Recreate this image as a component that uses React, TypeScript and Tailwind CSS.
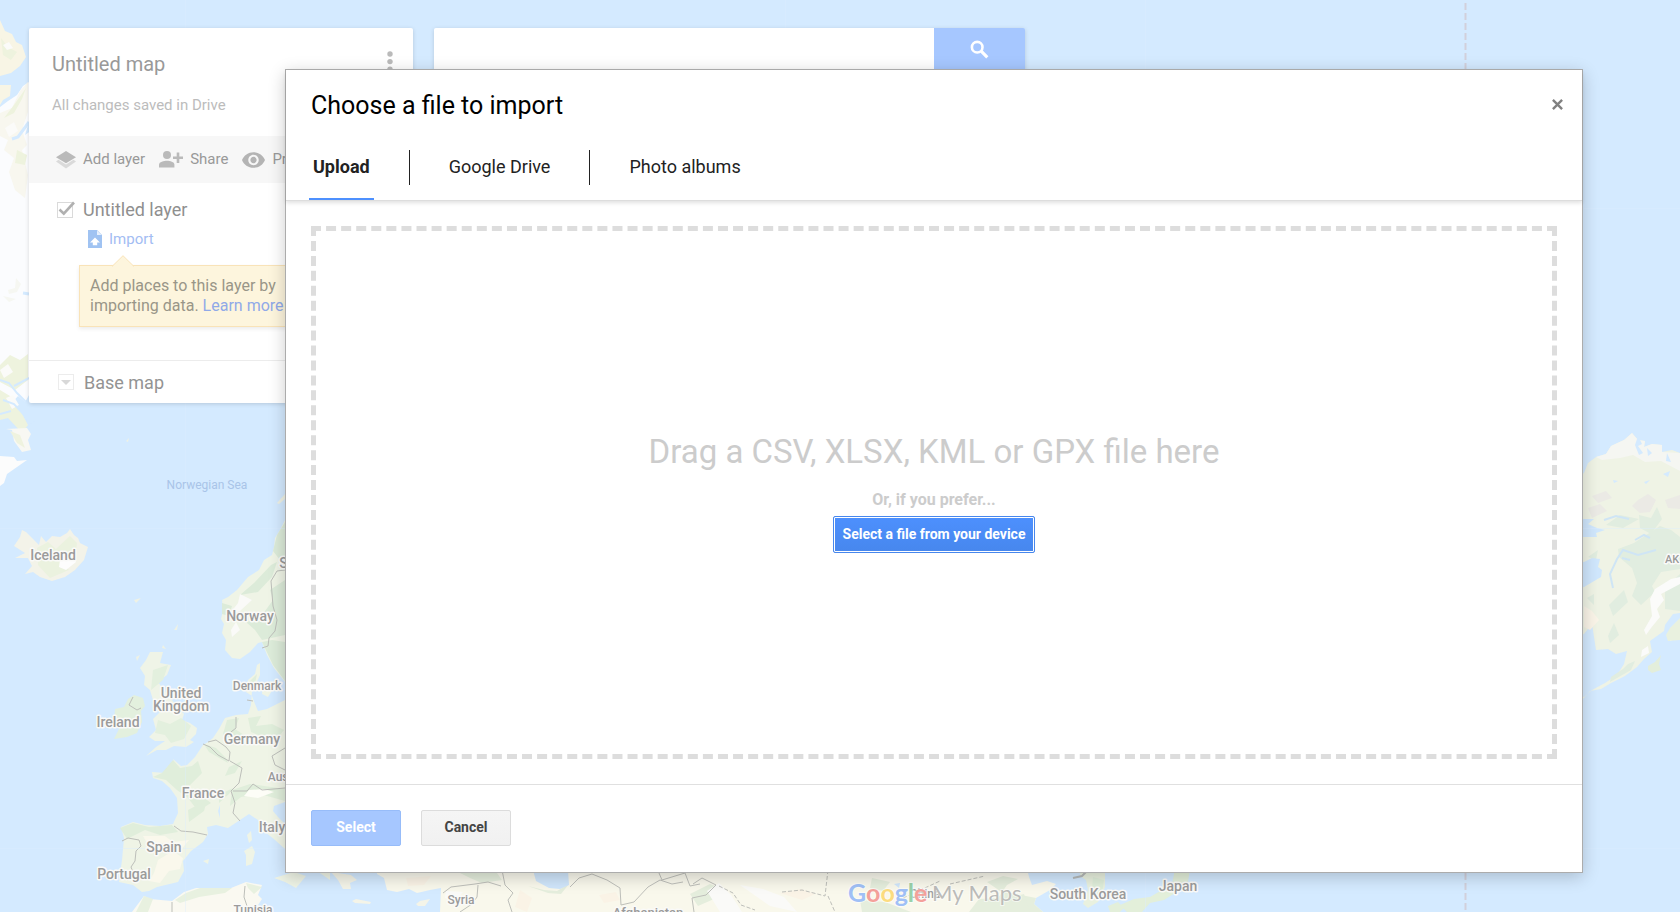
import React, { useState } from "react";

// -------------------------------------------------------
// ICONS
// -------------------------------------------------------

const LayersIcon = () => (
  <svg viewBox="0 0 20 18" className="w-5 h-[18px]">
    <path d="M0 10.5L10 17.5L20 10.5L17.5 8.8L10 13.6L2.5 8.8Z" fill="#dadada" />
    <path d="M10 0L20 6.3L10 12.2L0 6.3Z" fill="#bababa" />
  </svg>
);

const ShareIcon = () => (
  <svg viewBox="0 0 24 17" fill="#bababa" className="w-6 h-[17px]">
    <circle cx="8" cy="4" r="4" />
    <path d="M0 16.500V13.600C0 11 5 9.800 8 9.800s7.400 1.200 7.400 3.800v2.900z" />
    <path d="M17.700 1.500h2.600v4h3.700v2.400h-3.700v4h-2.600v-4H14V5.500h3.700z" />
  </svg>
);

const EyeIcon = () => (
  <svg viewBox="1 4.500 22 15" fill="#b4b4b4" className="w-[23px] h-4">
    <path d="M12 4.500C7 4.500 2.730 7.610 1 12c1.730 4.390 6 7.500 11 7.500s9.270-3.110 11-7.500c-1.730-4.390-6-7.500-11-7.500zM12 17c-2.760 0-5-2.240-5-5s2.240-5 5-5 5 2.240 5 5-2.240 5-5 5zm0-8c-1.660 0-3 1.340-3 3s1.340 3 3 3 3-1.340 3-3-1.340-3-3-3z" />
  </svg>
);

const MoreIcon = () => (
  <svg viewBox="0 0 6 22" fill="#bababa" className="w-[6px] h-[22px]">
    <circle cx="3" cy="3" r="2.700" />
    <circle cx="3" cy="10.600" r="2.700" />
    <circle cx="3" cy="18.200" r="2.700" />
  </svg>
);

const ImportIcon = () => (
  <svg viewBox="0 0 14 18" className="w-[14px] h-[18px]">
    <path d="M0 0H9L14 5V18H0Z" fill="#a0c3f2" />
    <path d="M9 0.500V5H13.500Z" fill="#e8f1fd" />
    <path d="M7 7.500L12 12.500H9.200V15.300H4.800V12.500H2Z" fill="#fff" />
  </svg>
);

const SearchIcon = () => (
  <svg viewBox="0 0 19 19" className="w-[19px] h-[19px]" fill="none" stroke="#fff">
    <circle cx="7.200" cy="7.200" r="5.300" strokeWidth="2.600" />
    <path d="M11.200 11.200L17.300 17.300" strokeWidth="3.200" />
  </svg>
);

const CloseIcon = () => (
  <svg viewBox="0 0 11 11" className="w-[11px] h-[11px]" stroke="#808080" strokeWidth="2.400">
    <path d="M0.900 0.900L10.100 10.100M10.100 0.900L0.900 10.100" />
  </svg>
);

// -------------------------------------------------------
// MAP
// -------------------------------------------------------

const LABELS = [
  { x: 53, y: 560, size: 14, text: "Iceland" },
  { x: 250, y: 621, size: 14, text: "Norway" },
  { x: 181, y: 698, size: 14, text: "United" },
  { x: 181, y: 711, size: 14, text: "Kingdom" },
  { x: 118, y: 727, size: 14, text: "Ireland" },
  { x: 257, y: 690, size: 12, text: "Denmark" },
  { x: 252, y: 744, size: 14, text: "Germany" },
  { x: 287, y: 781, size: 12, text: "Austria" },
  { x: 203, y: 798, size: 14, text: "France" },
  { x: 272, y: 832, size: 14, text: "Italy" },
  { x: 164, y: 852, size: 14, text: "Spain" },
  { x: 124, y: 879, size: 14, text: "Portugal" },
  { x: 253, y: 914, size: 12, text: "Tunisia" },
  { x: 304, y: 568, size: 14, text: "Sweden" },
  { x: 461, y: 904, size: 12, text: "Syria" },
  { x: 648, y: 917, size: 13, text: "Afghanistan" },
  { x: 925, y: 898, size: 12, text: "China" },
  { x: 1088, y: 899, size: 14, text: "South Korea" },
  { x: 1178, y: 891, size: 14, text: "Japan" },
  { x: 1672, y: 563, size: 11, text: "AK" },
];

const WorldMap = () => (
  <svg viewBox="0 0 1680 912" preserveAspectRatio="xMinYMin slice" className="absolute inset-0 w-full h-full">
    <rect width="1680" height="912" fill="#d4eaff" />

    {/* Greenland */}
    <path fill="#fbfcfe" d="M29 82L23 86L17 95L8 101L0 107V410L10 405L18 396L25 402L32 390V130L25 135L29 122Z" />
    <g fill="#f8f5e5">
      <path d="M0 20L5 31L12 34L16 42L22 45L26 57L20 66L11 73L0 76Z" />
      <path d="M0 85H11L10 96L3 100L0 105Z" />
    </g>
    <path fill="#f8f7ef" d="M20 91L28 82V112L22 130L27 145L22 150L28 175L25 198L15 190L9 172L14 158L4 150L8 140L0 136V113L12 108Z" />
    <g fill="#eef3de">
      <path d="M1 38L8 47L17 52L11 60L3 55Z" />
      <path d="M14 105L26 88L22 99L14 113L4 118Z" />
      <path d="M17 150L27 155L25 165L15 163Z" />
      <path d="M0 365L10 355L20 360L28 354V380L15 390L0 382Z" />
      <path d="M0 390L10 396L20 410L28 425L22 433L8 418L0 420Z" />
    </g>
    <path fill="#f6f7f2" d="M16 278L21 284L17 292L9 294L8 290L15 288ZM3 296L16 299L9 302Z" />
    <g fill="#fbfbf9">
      <path d="M3 45L9 42L13 48L7 50ZM5 128L14 122L18 131L9 137ZM0 370L8 364L13 372L4 378ZM6 398L13 395L19 405L12 409Z" />
    </g>
    <g fill="none" stroke="#d4eaff">
      <path d="M0 380L9 383L17 393L29 405M3 400L14 404L29 420M14 386L29 378M0 414L11 411" strokeWidth="2" />
      <path d="M29 294L23 293M29 122L18 137L12 139" strokeWidth="3" />
    </g>
    <path fill="#d4eaff" d="M29 403L22 412L29 425L36 420V403Z" />
    <path fill="#f8f8f3" d="M6 429L12 430L14 441L22 452L31 450L28 440L31 434L27 428Z" />
    <path fill="#eff3df" d="M10 431L20 435L25 448L17 443Z" />
    <path fill="#fcfcfc" d="M0 456L14 457L17 461L27 460L17 467L7 474L4 483L0 486Z" />

    {/* Iceland and the small islands */}
    <path fill="#f3f3e9" d="M22 530L26 532L34 540L39 545L41 536L46 542L52 536L60 537L67 533L70 529L74 535L78 538L80 543L88 547L84 560L75 570L65 577L52 581L40 577L33 572L25 574L32 566L28 558L15 558L25 553L14 546L20 537Z" />
    <path fill="#ebf2df" d="M37 548L48 542L56 549L70 536L77 543L75 558L60 562L69 570L50 578L38 565Z" />
    <path fill="#fdfdfd" d="M60 560L73 555L76 562L66 570L59 567Z" />
    <path fill="#eff2e5" d="M134 600L141 598L136 603ZM174 630L178 624L177 630ZM136 657L140 655L137 661ZM126 441L129 438L128 442ZM163 645L166 649L162 648ZM277 503L285 494V499L279 504Z" />

    {/* Scandinavia */}
    <path fill="#eff4e6" d="M330 500L285 520L280 530L275 538L274 547L272 555L264 560L259 570L248 577L237 590L228 597L222 600L223 610L221 619L224 624L222 633L226 640L225 650L232 658L240 659L250 652L258 643L262 642L267 655L274 668L285 682H330Z" />
    <g fill="#dcebd9">
      <path d="M285 522L277 535L273 551L280 560L285 560ZM271 565L277 562L272 577L258 592L240 595L254 583ZM285 580L270 590L273 600L260 618L246 622L255 630L262 640L285 635ZM222 603L232 606L229 616L222 614Z" />
      <path d="M262 642L272 640L285 642V681L273 665Z" />
    </g>
    <g fill="#fafaf8">
      <path d="M240 594L252 600L240 611L228 616L238 603ZM231 630L236 622L240 630L232 637Z" />
    </g>
    <path d="M285 570L277 571L271 581L273 606L277 620L275 631L269 638L268 646L262 648" fill="none" stroke="#bdbfba" />

    {/* Britain and Ireland */}
    <path fill="#eff4e7" d="M150 652L163 652L160 663L171 665L167 675L158 682L164 690L176 705L184 714L182 720L190 723L197 728L196 734L190 740L194 742L186 747L174 746L166 750L157 750L146 756L156 747L165 741L155 741L149 737L156 730L153 719L160 712L162 703L153 700L150 690L144 685L145 676L140 668L146 660Z" />
    <path fill="#e3f0de" d="M153 670L168 665L163 680L151 690ZM158 720L170 724L181 718L191 726L184 739L171 743L165 735L155 733Z" />
    <path fill="#e3f0de" d="M128 699L134 695L143 698L145 706L141 711L142 722L137 733L127 737L114 739L120 727L114 720L115 709L124 707Z" />
    <path d="M133 697L129 705L137 710L141 708" fill="none" stroke="#bdbfba" />

    {/* Continental Europe */}
    <path fill="#eff4e6" d="M330 700L285 700L277 704L267 709L258 711L255 704L252 696L246 692L248 680L255 674L257 665L260 663L260 675L256 684L252 691L251 705L248 714L236 715L225 718L219 729L213 738L208 742L203 745L195 757L187 765L181 766L173 759L176 771L165 773L152 772L153 778L162 781L170 788L177 798L178 813L173 824L160 826L145 825L133 822L121 827L124 838L122 860L119 882L133 885L142 892L149 891L157 887L178 882L184 871L183 861L191 851L203 842L208 834L207 827L216 825L228 828L240 820L249 814L258 820L264 831L275 840L285 849L330 880Z" />
    <path fill="#eff4e6" d="M263 684L271 681L273 689L268 697L262 694Z" />
    <g fill="#e0eedb">
      <path d="M173 760L180 768L192 766L198 761L202 773L188 787L199 794L211 803L198 811L188 798L177 790L166 780L153 777L162 773Z" />
      <path d="M227 720L239 718L235 729L244 735L232 744L223 734ZM248 718L261 716L256 726L272 724L284 730L276 740L263 737L251 732Z" />
      <path d="M120 828L133 823L149 827L172 825L178 832L160 835L145 830L127 839ZM204 744L216 748L226 758L228 763L209 752Z" />
      <path d="M232 790L250 784L285 789V801L260 794L241 797L230 806ZM229 767L242 761L235 773L225 776Z" />
      <path d="M188 810L207 800L204 811L189 822ZM248 683L257 674L254 688ZM219 795L233 788L229 794L219 803Z" />
    </g>
    <g fill="#faf8ec">
      <path d="M158 860L173 851L183 858L180 869L169 871L160 883L149 881L154 873Z" />
      <path d="M143 836L165 836L173 842L189 840L181 850L166 843L148 845Z" />
    </g>
    <path fill="#fdfdf7" d="M249 790L264 789L274 792L258 798L244 796Z" />
    <path fill="#d4eaff" d="M274 806L285 802V824L278 817L273 811ZM218 811L220 805L220 818Z" />
    <g fill="#eff4e6">
      <path d="M247 835L251 831L252 840L249 843ZM244 851L252 846L255 852L252 864L246 866L246 855ZM203 861L209 859L208 864ZM274 878L294 872L306 876L296 888L285 882Z" />
    </g>
    <g fill="none" stroke="#bdbfba">
      <path d="M203 744L210 747L218 755L229 761L230 752L226 747L216 740L208 742M230 761L242 768L239 783L231 791L235 803L233 813L240 821M233 791L247 791L253 784L262 790L285 788M236 717L236 728L231 732M174 826L181 831L193 832L207 835M122 841L128 838L139 840L141 846L136 851L135 861L131 867L134 875L127 880M285 748L272 756L275 765L285 770" />
      <path d="M247 700L253 701" />
    </g>

    {/* North Africa */}
    <path fill="#faf9f1" d="M132 912L144 896L150 899L172 901L184 892L196 888L231 888L246 882L262 885L258 895L262 899L258 905L268 912Z" />
    <path fill="#e8f1e0" d="M136 912L144 896L153 899L148 912ZM186 893L200 888L232 888L225 893L199 897L180 903L175 900ZM246 883L262 887L254 894L248 888Z" />
    <path d="M172 902V912M245 886L244 897L249 912" fill="none" stroke="#bdbfba" />

    {/* Mediterranean through to China */}
    <path fill="#f9f8ec" d="M377 860V874L384 878L387 890L397 892L409 889L417 893L430 890L441 888L440 912H1043L1034 904L1036 898L1050 890L1056 884L1047 881L1032 885L1029 877L1025 860Z" />
    <path fill="#f4f4e8" d="M331 872L351 875L357 880L350 883L351 889L343 889L338 880Z" />
    <path fill="#f4f4e8" d="M352 901L356 899L371 902L370 904L355 903ZM416 904L420 901L430 899L425 906L418 906Z" />
    <g fill="#e5eedd">
      <path d="M460 873L497 873L502 880L482 883L470 878ZM528 886L544 890L557 891L569 884L561 894L548 893ZM690 894L710 884L721 888L714 899L698 906ZM987 882L1003 876L1018 879L1007 885L998 898L979 899L969 912H1043L1034 904L1036 898L1000 891Z" />
      <path d="M872 878L890 882L883 891L870 888ZM1000 900L1024 894L1030 912H1006ZM860 900L885 902L911 912H862Z" />
    </g>
    <g fill="#faf3e6">
      <path d="M520 890L532 898L527 912L515 907ZM780 893L801 889L815 894L802 900ZM599 895L616 892L620 900L604 903ZM406 878L431 876L424 885L408 886Z" />
    </g>
    <g fill="#fafaf8">
      <path d="M707 891L719 883L731 895L742 912H720ZM740 885L763 889L784 897L797 912L770 906ZM446 891L463 892L456 900L445 898Z" />
    </g>
    <path fill="#d0e6fb" d="M533 870L568 870L569 885L560 889L549 888L536 881ZM894 884L900 883L899 888Z" />
    <g fill="none" stroke="#bebfba">
      <path d="M502 870L505 885L513 893L508 900L512 912M443 893L451 887L475 884L488 882L501 886M478 885L477 897L472 904L460 912M570 887L579 878L592 874L607 880L620 888L621 905L634 902L648 887L660 880L672 884L683 882M659 873L662 880L685 873L690 886L700 884M693 884L702 878L716 885L706 895L692 898L694 912" />
      <path d="M719 886L733 893L741 905L755 910M782 892L802 890L825 896L828 870M828 896L835 912M903 898L940 881M950 884L985 876" strokeDasharray="4 2" />
    </g>

    {/* Korea and Japan */}
    <path fill="#e9f1df" d="M1081 868L1105 872L1105 887L1098 902L1088 908L1083 904L1088 890L1086 880L1080 876Z" />
    <path fill="#dfeeda" d="M1093 877L1104 880L1102 894L1091 900Z" />
    <path fill="#e3efda" d="M1175 868L1190 870L1187 887L1175 893L1164 900L1150 903L1142 912H1127L1120 905L1134 899L1150 897L1162 890L1172 885ZM1108 906L1118 902L1124 908L1120 912H1110Z" />
    <path d="M1073 878L1082 876L1087 871" fill="none" stroke="#b6b9b9" strokeWidth="2" />

    {/* Alaska */}
    <path fill="#eff3e5" d="M1570 480L1584 473L1588 463L1596 457L1606 454L1611 446L1624 440L1632 433L1638 440L1645 441L1644 447L1652 444L1662 445L1662 452L1672 450L1680 453V613L1673 614L1665 625L1664 631L1650 641L1652 652L1644 659L1637 667L1625 676L1611 683L1601 689L1590 691L1584 698L1570 710V692L1584 697L1592 690L1605 683L1617 675L1624 664L1627 651L1616 654L1608 649L1596 650L1592 624L1584 634L1570 640Z" />
    <path fill="#f5f6f2" d="M1596 457L1606 454L1611 446L1624 440L1632 433L1638 440L1645 441L1644 447L1652 444L1662 445L1662 452L1680 453V471L1661 461L1645 462L1633 455L1620 458L1602 460Z" />
    <path fill="#d4eaff" d="M1638 436L1642 444L1638 446L1643 453L1639 455L1635 445ZM1647 448L1652 453L1648 456ZM1667 453L1671 462L1666 461ZM1663 474L1670 471L1668 477ZM1613 480L1618 481L1614 483ZM1644 482L1650 480L1646 484Z" />
    <g fill="#e1ede0">
      <path d="M1618 549L1634 543L1660 526L1671 530L1680 537V569L1661 572L1652 586L1655 592L1641 605L1632 596L1637 583L1632 568L1619 557Z" />
      <path d="M1606 525L1620 515L1639 519L1623 528ZM1639 515L1651 518L1657 507L1662 519L1651 534L1640 528ZM1608 636L1614 623L1619 635L1610 643ZM1609 605L1624 590L1628 602L1613 616ZM1588 557L1598 550L1596 560ZM1594 605L1587 598L1594 594Z" />
      <path d="M1680 574V611L1665 609L1665 588ZM1628 664L1635 661L1631 670L1610 682L1611 677L1623 669Z" />
    </g>
    <g fill="#ebeae5">
      <path d="M1638 500L1648 494L1656 500L1650 512L1640 513L1632 506ZM1665 500L1680 495V509L1668 508ZM1592 496L1606 491L1612 498L1598 503ZM1588 508L1600 504L1607 511L1592 518Z" />
    </g>
    <g fill="#fbfbfa">
      <path d="M1650 599L1655 589L1671 579L1680 577L1680 584L1661 594L1664 600L1657 609L1660 617L1651 628L1646 635L1644 630L1652 616ZM1642 650L1648 646L1649 653L1641 657Z" />
      <path d="M1672 636L1680 628V636L1670 641Z" />
    </g>
    <path fill="#faf4e8" d="M1584 606L1592 611L1599 620L1590 630L1584 627Z" />
    <path fill="#d0e7fd" d="M1570 518L1584 519L1594 519L1588 524L1597 528L1605 530L1596 533L1597 537L1570 537ZM1570 560L1584 562L1592 558L1600 559L1598 567L1602 570L1601 577L1584 587L1570 590Z" />
    <path d="M1613 588L1610 574L1617 559L1623 550L1638 555L1656 550M1630 560L1622 558M1604 520L1616 516L1629 519M1635 540L1644 535L1650 538" fill="none" stroke="#cfe5f5" strokeWidth="2" />
    <path fill="#e9f1df" d="M1670 628L1680 618V640L1668 641L1666 635Z" />
    <path fill="#e3eedb" d="M1648 666L1655 662L1661 655L1659 664L1661 670L1652 673L1648 670Z" />

    {/* Faint graticule and the date line */}
    <path d="M185.500 0V912M0 528.500H1680M0 848.500H1680M785.500 0V70M1145.500 0V912M1583 208.500H1680" stroke="#ddeeff" fill="none" opacity="0.4" />
    <path d="M1465.500 3V912" stroke="#d2d0db" strokeWidth="2" strokeDasharray="7 3" fill="none" />

    <g fontFamily="Roboto, sans-serif" textAnchor="middle">
      <text x="207" y="489" fontSize="12" fill="#a9c4e8">Norwegian Sea</text>
      {LABELS.map((label) => (
        <text
          key={label.text}
          x={label.x}
          y={label.y}
          fontSize={label.size}
          fontWeight="500"
          fill="#9b9b9b"
          stroke="#fafaf8"
          strokeWidth="3"
          strokeLinejoin="round"
          paintOrder="stroke"
        >
          {label.text}
        </text>
      ))}
    </g>

    {/* Watermark */}
    <g fontFamily="Lato, sans-serif" stroke="#ffffff" strokeOpacity="0.6" strokeWidth="2" paintOrder="stroke">
      <text x="848" y="902" fontSize="25" fontWeight="700">
        <tspan fill="#a0c0f6">G</tspan>
        <tspan fill="#f4a19b">o</tspan>
        <tspan fill="#fcdc80">o</tspan>
        <tspan fill="#a0c0f6">g</tspan>
        <tspan fill="#9bd2aa">l</tspan>
        <tspan fill="#f4a19b">e</tspan>
      </text>
      <text x="932" y="901" fontSize="22" fill="#bcbcba">My Maps</text>
    </g>
  </svg>
);

// -------------------------------------------------------
// PANELS BEHIND THE DIALOG
// -------------------------------------------------------

const Sidebar = () => (
  <aside className="w-96 shrink-0 bg-white rounded-[2px] shadow-[0_1px_4px_rgba(0,0,0,0.15)]">
    <div className="flex justify-between h-[108px] pl-[23px] pr-5 pt-[23px]">
      <div>
        <h2 className="text-[20px] leading-[26px] text-[#999]">Untitled map</h2>
        <p className="mt-[18px] text-[15px] leading-5 text-[#bcbcbc]">All changes saved in Drive</p>
      </div>
      <button type="button" aria-label="Map options" className="self-start">
        <MoreIcon />
      </button>
    </div>

    <div className="flex items-center h-[47px] pl-[27px] bg-[#f7f7f7] text-[15px] text-[#999]">
      <button type="button" className="flex items-center gap-[7px]">
        <LayersIcon />
        Add layer
      </button>
      <button type="button" className="flex items-center gap-[7px] ml-[14px]">
        <ShareIcon />
        Share
      </button>
      <button type="button" className="flex items-center gap-[7px] ml-[14px]">
        <EyeIcon />
        Preview
      </button>
    </div>

    <div className="h-[178px] pt-[15px] border-b border-[#ececec]">
      <label className="flex items-center gap-[10px] pl-7 text-[18px] leading-6 text-[#8f8f8f]">
        <span className="relative w-4 h-4">
          <input type="checkbox" defaultChecked className="block appearance-none w-4 h-4 border border-[#dadada]" />
          <svg viewBox="0 0 18 16" className="absolute left-[1px] -top-[1px] w-[18px] h-4" fill="none" stroke="#b0b0b0" strokeWidth="2.600">
            <path d="M1.500 8.500L5.800 12.600L16 1.500" />
          </svg>
        </span>
        Untitled layer
      </label>
      <a href="#import" className="flex items-center gap-[7px] w-fit ml-[59px] mt-[7px] text-[15px] leading-5 text-[#a3bdf3]">
        <ImportIcon />
        Import
      </a>
      <div className="relative mt-4 ml-[50px] mr-5 px-[10px] py-[10px] border border-[#f9e3b8] bg-[#fdf5dd] text-[16px] leading-5 text-[#999688] shadow-[0_2px_4px_rgba(0,0,0,0.08)]">
        <svg viewBox="0 0 22 12" className="absolute left-8 -top-[11px] w-[22px] h-3">
          <path d="M0 11.500L11 0.700L22 11.500" fill="#fdf5dd" stroke="#f9e3b8" />
        </svg>
        <p>
          Add places to this layer by<br />
          importing data. <a href="#learn" className="text-[#90a9e8]">Learn more</a>
        </p>
      </div>
    </div>

    <div className="flex items-center gap-[10px] h-[42px] pl-[29px] text-[18px] text-[#939393]">
      <button type="button" aria-label="Expand base map" className="flex items-center justify-center w-4 h-4 border border-[#ececec]">
        <svg viewBox="0 0 10 5" className="w-[10px] h-[5px]"><path d="M0 0H10L5 5Z" fill="#d8d8d8" /></svg>
      </button>
      Base map
    </div>
  </aside>
);

const SearchBar = () => (
  <form className="flex w-[591px] h-[47px] rounded-[2px] overflow-hidden shadow-[0_1px_4px_rgba(0,0,0,0.15)]">
    <input type="text" aria-label="Search the map" className="flex-1 bg-white px-3 outline-none" />
    <button type="button" aria-label="Search" className="flex justify-center w-[91px] pt-3 bg-[#a6c7ff]">
      <SearchIcon />
    </button>
  </form>
);

// -------------------------------------------------------
// IMPORT DIALOG
// -------------------------------------------------------

const TABS = ["Upload", "Google Drive", "Photo albums"];

const ImportDialog = () => {
  const [active, setActive] = useState("Upload");

  return (
    <div role="dialog" aria-labelledby="dialog-title" className="flex flex-col flex-1 bg-white border border-[#acacac] shadow-[0_4px_16px_rgba(0,0,0,0.2)]">
      <header className="border-b border-[#ddd] shadow-[0_2px_4px_rgba(0,0,0,0.12)]">
        <div className="flex justify-between pl-[25px] pr-[19px] pt-5">
          <h1 id="dialog-title" className="text-[25px] leading-8 text-black">Choose a file to import</h1>
          <button type="button" aria-label="Close" className="self-start mt-[9px]">
            <CloseIcon />
          </button>
        </div>
        <nav className="flex items-end h-[78px] pl-[23px]">
          {TABS.map((tab, i) => (
            <React.Fragment key={tab}>
              {i > 0 && <span className="w-px h-[35px] mx-[35px] mb-[15px] bg-[#222]" />}
              <button
                type="button"
                onClick={() => setActive(tab)}
                className={
                  active === tab
                    ? "px-1 pb-[17px] border-b-2 border-[#4d90fe] text-[18px] leading-7 font-bold text-[#222]"
                    : "px-1 pb-[17px] border-b-2 border-transparent text-[18px] leading-7 text-[#222]"
                }
              >
                {tab}
              </button>
            </React.Fragment>
          ))}
        </nav>
      </header>

      <div className="flex flex-1 p-[25px]">
        <div className="flex flex-col flex-1 items-center justify-center border-[5px] border-dashed border-[#ddd] text-[#ccc]">
          <p className="text-[33px] leading-10">Drag a CSV, XLSX, KML or GPX file here</p>
          <p className="mt-4 text-[16px] leading-6 font-bold">Or, if you prefer...</p>
          <button type="button" className="mt-1 h-[37px] px-[9px] rounded-[2px] border border-[#4787ed] bg-linear-to-b from-[#4d90fe] to-[#4787ed] text-[14px] font-bold text-white inset-ring inset-ring-white">
            Select a file from your device
          </button>
        </div>
      </div>

      <footer className="flex gap-5 px-[25px] pt-[25px] pb-[26px] border-t border-[#e0e0e0] text-[14px] font-bold">
        <button type="button" className="w-[90px] h-9 pb-[2px] rounded-[2px] border border-[#97bcf9] bg-[#a6c7ff] text-white">Select</button>
        <button type="button" className="w-[90px] h-9 pb-[2px] rounded-[2px] border border-[#dcdcdc] bg-linear-to-b from-[#f5f5f5] to-[#f1f1f1] text-[#444]">Cancel</button>
      </footer>
    </div>
  );
};

export default function App() {
  return (
    <div className="relative min-h-screen overflow-hidden font-[Roboto,sans-serif]">
      <WorldMap />
      <div className="relative flex gap-[21px] items-start pl-[29px] pt-7">
        <Sidebar />
        <SearchBar />
      </div>
      <div className="absolute inset-0 flex pt-[69px] pb-[39px] pl-[285px] pr-[97px]">
        <ImportDialog />
      </div>
    </div>
  );
}
